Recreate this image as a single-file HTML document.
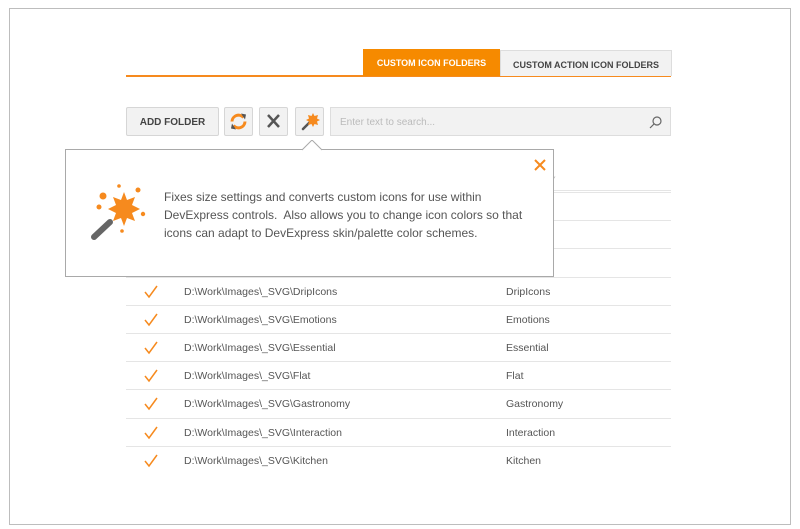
<!DOCTYPE html>
<html><head><style>
body{margin:0;width:800px;height:529px;background:#fff;font-family:"Liberation Sans",sans-serif;position:relative;overflow:hidden}
.a{position:absolute}
.frame{left:9px;top:8px;width:780px;height:515px;border:1px solid #bdbdbd}
.tabline{left:126px;top:75px;width:545px;height:2px;background:#f68a1e}
.tab1{left:363px;top:49px;width:137px;height:27px;background:#f68a00;color:#fff;font-size:9px;font-weight:bold;text-align:center;line-height:29px}
.tab2{left:500px;top:50px;width:170px;height:25px;background:#f2f2f2;border:1px solid #ddd;border-bottom:none;color:#444;font-size:9px;font-weight:bold;text-align:center;line-height:28px}
.btn{top:107px;height:29px;background:#f2f2f2;border:1px solid #d6d6d6;border-radius:2px;box-sizing:border-box}
.search{left:330px;top:107px;width:341px;height:29px;background:#f2f2f2;border:1px solid #ddd;box-sizing:border-box;color:#bbb;font-size:10px;line-height:29px;padding-left:9px}
.row{left:126px;width:545px;height:1px;background:#e5e5e5}
.t{font-size:10.5px;color:#555}
.pop{left:65px;top:149px;width:487px;height:126px;border:1px solid #a9a9a9;background:#fff}
.txt{left:98px;top:38px;font-size:12px;color:#555;line-height:18px;white-space:nowrap}
</style></head><body>
<div class="a frame"></div>
<div class="a tabline"></div>
<div class="a tab1">CUSTOM ICON FOLDERS</div>
<div class="a tab2">CUSTOM ACTION ICON FOLDERS</div>
<div class="a btn" style="left:126px;width:93px;font-size:10px;font-weight:bold;color:#444;text-align:center;line-height:29px">ADD FOLDER</div>
<div class="a btn" style="left:224px;width:29px"><svg width="27" height="27" viewBox="0 0 27 26"><path d="M7 13a6.5 6.5 0 0 1 11.5-4" stroke="#f68a1e" stroke-width="3" fill="none"/><path d="M20 13a6.5 6.5 0 0 1-11.5 4" stroke="#f68a1e" stroke-width="3" fill="none"/><path d="M16 5l5 1-1 5z" fill="#555"/><path d="M11 21l-5-1 1-5z" fill="#555"/></svg></div>
<div class="a btn" style="left:259px;width:29px"><svg width="27" height="27"><path d="M8 7l11 12M19 7L8 19" stroke="#555" stroke-width="2.5"/></svg></div>
<div class="a btn" style="left:295px;width:29px"><svg width="27" height="27"><path d="M7 21l7-7" stroke="#555" stroke-width="2.5" stroke-linecap="round"/><polygon points="17,5 18.5,8 22,7 21,10.5 24,12 21,13.5 22,17 18.5,16 17,19 15.5,16 12,17 13,13.5 10,12 13,10.5 12,7 15.5,8" fill="#f68a1e"/></svg></div>
<div class="a search">Enter text to search...<svg class="a" style="right:7px;top:7px" width="14" height="14"><circle cx="8" cy="6" r="4" stroke="#666" fill="none" stroke-width="1.2"/><path d="M5 9L1 13" stroke="#666" stroke-width="1.2"/></svg></div>
<div class="a t" style="left:506px;top:175px;color:#bbb;font-size:9px">CATEGORY</div>
<div class="a row" style="top:190px"></div><div class="a row" style="top:192px"></div>
<div class="a row" style="top:220px"></div><div class="a row" style="top:248px"></div><div class="a row" style="top:277px"></div>
<div class="a row" style="top:305px"></div><div class="a row" style="top:333px"></div><div class="a row" style="top:361px"></div><div class="a row" style="top:389px"></div><div class="a row" style="top:418px"></div><div class="a row" style="top:446px"></div>
<svg class="a" style="left:144px;top:285px" width="14" height="14"><path d="M1 7l4 5 8-11" stroke="#f68a1e" stroke-width="1.5" fill="none"/></svg>
<svg class="a" style="left:144px;top:313px" width="14" height="14"><path d="M1 7l4 5 8-11" stroke="#f68a1e" stroke-width="1.5" fill="none"/></svg>
<svg class="a" style="left:144px;top:341px" width="14" height="14"><path d="M1 7l4 5 8-11" stroke="#f68a1e" stroke-width="1.5" fill="none"/></svg>
<svg class="a" style="left:144px;top:369px" width="14" height="14"><path d="M1 7l4 5 8-11" stroke="#f68a1e" stroke-width="1.5" fill="none"/></svg>
<svg class="a" style="left:144px;top:397px" width="14" height="14"><path d="M1 7l4 5 8-11" stroke="#f68a1e" stroke-width="1.5" fill="none"/></svg>
<svg class="a" style="left:144px;top:426px" width="14" height="14"><path d="M1 7l4 5 8-11" stroke="#f68a1e" stroke-width="1.5" fill="none"/></svg>
<svg class="a" style="left:144px;top:454px" width="14" height="14"><path d="M1 7l4 5 8-11" stroke="#f68a1e" stroke-width="1.5" fill="none"/></svg>
<div class="a t" style="left:184px;top:286px">D:\Work\Images\_SVG\DripIcons</div><div class="a t" style="left:506px;top:286px">DripIcons</div>
<div class="a t" style="left:184px;top:314px">D:\Work\Images\_SVG\Emotions</div><div class="a t" style="left:506px;top:314px">Emotions</div>
<div class="a t" style="left:184px;top:342px">D:\Work\Images\_SVG\Essential</div><div class="a t" style="left:506px;top:342px">Essential</div>
<div class="a t" style="left:184px;top:370px">D:\Work\Images\_SVG\Flat</div><div class="a t" style="left:506px;top:370px">Flat</div>
<div class="a t" style="left:184px;top:398px">D:\Work\Images\_SVG\Gastronomy</div><div class="a t" style="left:506px;top:398px">Gastronomy</div>
<div class="a t" style="left:184px;top:427px">D:\Work\Images\_SVG\Interaction</div><div class="a t" style="left:506px;top:427px">Interaction</div>
<div class="a t" style="left:184px;top:455px">D:\Work\Images\_SVG\Kitchen</div><div class="a t" style="left:506px;top:455px">Kitchen</div>
<div class="a pop">
<svg class="a" style="left:236px;top:-10px" width="20" height="11"><path d="M0 10L10 0L20 10" fill="#fff" stroke="#a9a9a9"/></svg>
<svg class="a" style="left:467px;top:8px" width="14" height="14"><path d="M2 2l10 10M12 2L2 12" stroke="#f68a1e" stroke-width="2"/></svg>
<svg class="a" style="left:20px;top:30px" width="60" height="65"><path d="M8 57L24 42" stroke="#666" stroke-width="6" stroke-linecap="round"/>
<polygon points="38,12 41,20 49,17 46,25 54,29 46,33 49,41 41,38 38,46 35,38 27,41 30,33 22,29 30,25 27,17 35,20" fill="#f68a1e"/>
<circle cx="17" cy="16" r="3.5" fill="#f68a1e"/><circle cx="33" cy="6" r="1.8" fill="#f68a1e"/><circle cx="52" cy="10" r="2.5" fill="#f68a1e"/><circle cx="13" cy="27" r="2.5" fill="#f68a1e"/><circle cx="57" cy="34" r="2.2" fill="#f68a1e"/><circle cx="36" cy="51" r="1.8" fill="#f68a1e"/></svg>
<div class="a txt">Fixes size settings and converts custom icons for use within<br>DevExpress controls.&nbsp; Also allows you to change icon colors so that<br>icons can adapt to DevExpress skin/palette color schemes.</div>
</div>
</body></html>
